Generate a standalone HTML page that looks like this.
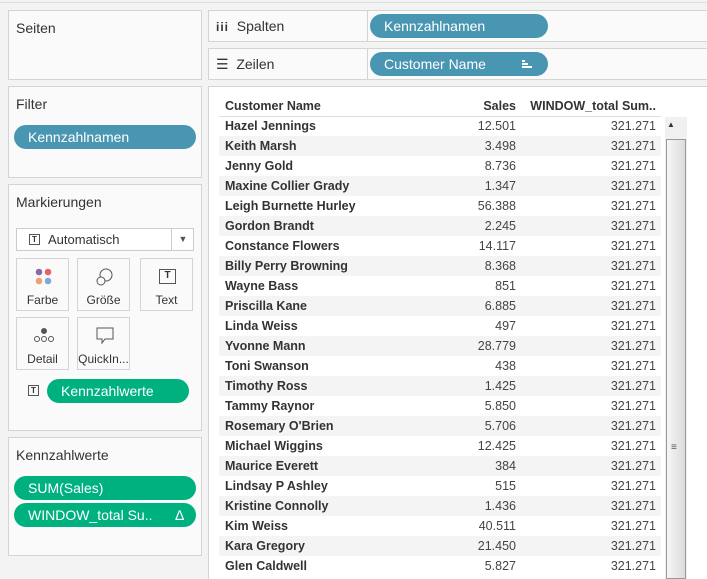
<!DOCTYPE html>
<html style="width:707px;height:579px;overflow:hidden"><head><style>
*{margin:0;padding:0;box-sizing:border-box}
body{width:707px;height:579px;background:#f3f3f3;font-family:"Liberation Sans",Arial,sans-serif;position:relative;overflow:hidden;color:#333}
.p{position:absolute;background:#fafafa;border:1px solid #d4d4d4}
.t{position:absolute;font-size:14px;color:#333}
.pill{position:absolute;border-radius:12px;color:#fff;font-size:14px;line-height:24px;padding-left:14px}
.blue{background:#4996b2}.green{background:#00b180}
.btn{position:absolute;width:53px;height:53px;border:1px solid #d4d4d4;background:#fafafa;font-size:12px;text-align:center}
.btn span{position:absolute;left:0;right:0;top:34px}
.row{position:absolute;left:219px;width:442px;height:20px;font-size:12.5px;line-height:20px}
.row b{position:absolute;left:6px;color:#333}
.row .s{position:absolute;right:145px;color:#444}
.row .w{position:absolute;right:5px;color:#444}
.g{background:#f4f4f4}
</style></head><body>
<div style="position:absolute;left:0;top:0;width:707px;height:3px;border-bottom:1px solid #ddd"></div>
<div class="p" style="left:8px;top:10px;width:194px;height:70px"></div>
<div class="t" style="left:16px;top:20px">Seiten</div>
<div class="p" style="left:8px;top:86px;width:194px;height:92px"></div>
<div class="t" style="left:16px;top:96px">Filter</div>
<div class="pill blue" style="left:14px;top:125px;width:182px">Kennzahlnamen</div>
<div class="p" style="left:8px;top:184px;width:194px;height:247px"></div>
<div class="t" style="left:16px;top:194px">Markierungen</div>
<div style="position:absolute;left:16px;top:228px;width:178px;height:23px;border:1px solid #ccc;background:#fff;font-size:13px;line-height:21px;padding-left:31px">Automatisch
<span style="position:absolute;left:12px;top:5px;width:11px;height:11px;border:1px solid #555;font-size:8px;line-height:9px;text-align:center;font-weight:bold">T</span>
<span style="position:absolute;left:154px;top:0;height:21px;border-left:1px solid #ccc;width:23px;text-align:center;font-size:9px;color:#555">▼</span></div>
<div class="btn" style="left:16px;top:258px"><svg style="position:absolute;left:18px;top:9px" width="18" height="18"><circle cx="4" cy="4" r="3.3" fill="#8a6aa0"/><circle cx="13" cy="4" r="3.3" fill="#e8606a"/><circle cx="4" cy="13" r="3.3" fill="#f0a070"/><circle cx="13" cy="13" r="3.3" fill="#80a8d8"/></svg><span>Farbe</span></div>
<div class="btn" style="left:77px;top:258px"><svg style="position:absolute;left:17px;top:8px" width="20" height="20" fill="none" stroke="#555"><circle cx="11" cy="8" r="6"/><circle cx="6" cy="14" r="4" fill="#fafafa"/></svg><span>Größe</span></div>
<div class="btn" style="left:140px;top:258px"><div style="position:absolute;left:18px;top:10px;width:17px;height:15px;border:1.5px solid #555;font-size:10px;font-weight:bold;line-height:12px">T</div><span>Text</span></div>
<div class="btn" style="left:16px;top:317px"><svg style="position:absolute;left:16px;top:9px" width="22" height="16" fill="none" stroke="#555"><circle cx="11" cy="4" r="2.5" fill="#555"/><circle cx="4" cy="12" r="2.5"/><circle cx="11" cy="12" r="2.5"/><circle cx="18" cy="12" r="2.5"/></svg><span>Detail</span></div>
<div class="btn" style="left:77px;top:317px"><svg style="position:absolute;left:18px;top:9px" width="18" height="18" fill="none" stroke="#555"><path d="M1 1h16v11h-8l-3 4v-4H1z"/></svg><span>QuickIn...</span></div>
<div style="position:absolute;left:28px;top:385px;width:11px;height:11px;border:1px solid #555;font-size:8px;line-height:9px;text-align:center;font-weight:bold">T</div>
<div class="pill green" style="left:47px;top:379px;width:142px">Kennzahlwerte</div>
<div class="p" style="left:8px;top:437px;width:194px;height:119px"></div>
<div class="t" style="left:16px;top:447px">Kennzahlwerte</div>
<div class="pill green" style="left:14px;top:476px;width:182px">SUM(Sales)</div>
<div class="pill green" style="left:14px;top:503px;width:182px">WINDOW_total Su..<span style="position:absolute;right:12px">∆</span></div>

<div class="p" style="left:208px;top:10px;width:499px;height:32px;border-right:none"></div>
<div style="position:absolute;left:367px;top:10px;height:32px;border-left:1px solid #d4d4d4"></div>
<div class="t" style="left:216px;top:18px"><b style="font-size:12px;letter-spacing:1px">iii</b>&nbsp; Spalten</div>
<div class="pill blue" style="left:370px;top:14px;width:178px">Kennzahlnamen</div>
<div class="p" style="left:208px;top:48px;width:499px;height:32px;border-right:none"></div>
<div style="position:absolute;left:367px;top:48px;height:32px;border-left:1px solid #d4d4d4"></div>
<div class="t" style="left:216px;top:56px">☰&nbsp; Zeilen</div>
<div class="pill blue" style="left:370px;top:52px;width:178px">Customer Name<svg style="position:absolute;left:152px;top:8px" width="11" height="9" fill="#fff"><rect x="0" y="0" width="3" height="2"/><rect x="0" y="3" width="6" height="2"/><rect x="0" y="6" width="10" height="2"/></svg></div>

<div style="position:absolute;left:208px;top:86px;width:499px;height:493px;background:#fff;border:1px solid #d4d4d4;border-right:none;border-bottom:none"></div>
<div class="row" style="top:96px;font-weight:bold"><b>Customer Name</b><b style="left:auto;right:145px">Sales</b><b style="left:auto;right:5px">WINDOW_total Sum..</b></div>
<div style="position:absolute;left:219px;top:116px;width:442px;border-top:1px solid #ddd"></div>
<div id="rows"></div>
<div style="position:absolute;left:665px;top:117px;width:22px;height:462px;background:#f0f0f0"></div>
<div style="position:absolute;left:667px;top:120px;font-size:8px;color:#333">▲</div>
<div style="position:absolute;left:666px;top:139px;width:20px;height:440px;background:linear-gradient(90deg,#f6f6f6,#dcdcdc);border:1px solid #999"></div>
<div style="position:absolute;left:671px;top:443px;font-size:10px;color:#555;line-height:10px">≡</div>
<script>
var d=[["Hazel Jennings","12.501"],["Keith Marsh","3.498"],["Jenny Gold","8.736"],["Maxine Collier Grady","1.347"],["Leigh Burnette Hurley","56.388"],["Gordon Brandt","2.245"],["Constance Flowers","14.117"],["Billy Perry Browning","8.368"],["Wayne Bass","851"],["Priscilla Kane","6.885"],["Linda Weiss","497"],["Yvonne Mann","28.779"],["Toni Swanson","438"],["Timothy Ross","1.425"],["Tammy Raynor","5.850"],["Rosemary O'Brien","5.706"],["Michael Wiggins","12.425"],["Maurice Everett","384"],["Lindsay P Ashley","515"],["Kristine Connolly","1.436"],["Kim Weiss","40.511"],["Kara Gregory","21.450"],["Glen Caldwell","5.827"]];
var h="";d.forEach(function(r,i){h+='<div class="row'+(i%2?' g':'')+'" style="top:'+(116+20*i)+'px"><b>'+r[0]+'</b><span class="s">'+r[1]+'</span><span class="w">321.271</span></div>'});
document.getElementById("rows").innerHTML=h;
</script>
</body></html>
